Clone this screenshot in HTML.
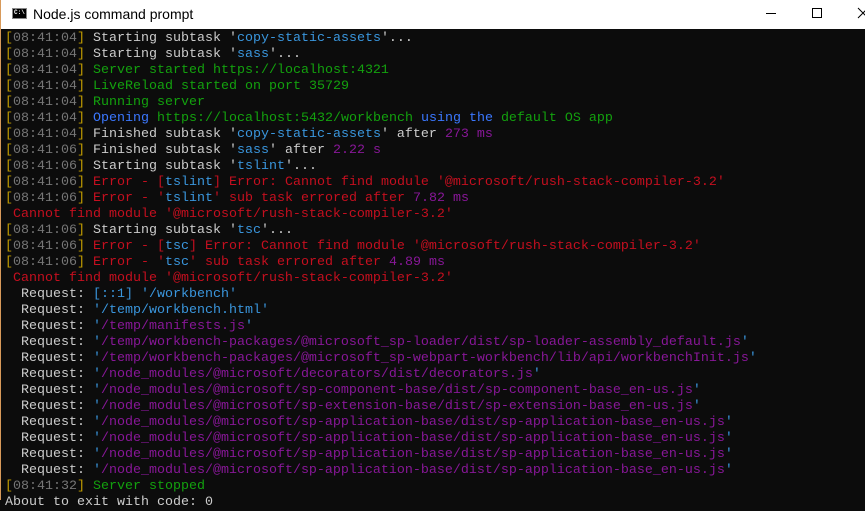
<!DOCTYPE html>
<html><head><meta charset="utf-8"><style>
html,body{margin:0;padding:0;width:865px;height:500px;overflow:hidden;background:#0c0c0c}
.tb{position:absolute;left:0;top:0;width:865px;height:29px;background:#fff;border-left:1px solid #d89a5a;box-sizing:border-box}
.tt{position:absolute;left:32px;top:6px;font:14px "Liberation Sans",sans-serif;color:#000}
.ic{position:absolute;left:11px;top:8px;width:15px;height:11px;background:#000;border:1px solid #888;box-sizing:border-box}
.ic span{position:absolute;left:1px;top:1px;font:bold 6px "Liberation Mono",monospace;color:#fff;line-height:6px}
.con{position:absolute;left:0;top:29px;width:865px;height:471px;border-left:1px solid #d89a5a;box-sizing:border-box}
pre{margin:0;padding:2px 0 0 4px;font:13.33px/16px "Liberation Mono",monospace;color:#cccccc;white-space:pre}
.g{color:#767676}.b{color:#c19c00}.c{color:#3a96dd}.gr{color:#13a10e}.r{color:#c50f1f}.p{color:#881798}.bl{color:#3b78ff}
</style></head><body>
<div class="tb"><div class="ic"><span>C:\</span></div><div class="tt">Node.js command prompt</div>
<svg style="position:absolute;left:760px;top:0" width="105" height="29"><line x1="5" y1="13.5" x2="15" y2="13.5" stroke="#000"/><rect x="51.5" y="8.5" width="9" height="9" fill="none" stroke="#000"/><path d="M97 8 L107 18 M107 8 L97 18" stroke="#000"/></svg></div>
<div class="con"><pre><span class="b">[</span><span class="g">08:41:04</span><span class="b">]</span> Starting subtask '<span class="c">copy-static-assets</span>'...
<span class="b">[</span><span class="g">08:41:04</span><span class="b">]</span> Starting subtask '<span class="c">sass</span>'...
<span class="b">[</span><span class="g">08:41:04</span><span class="b">]</span> <span class="gr">Server started https://localhost:4321</span>
<span class="b">[</span><span class="g">08:41:04</span><span class="b">]</span> <span class="gr">LiveReload started on port 35729</span>
<span class="b">[</span><span class="g">08:41:04</span><span class="b">]</span> <span class="gr">Running server</span>
<span class="b">[</span><span class="g">08:41:04</span><span class="b">]</span> <span class="bl">Opening</span> <span class="gr">https://localhost:5432/workbench</span> <span class="bl">using the</span> <span class="gr">default OS app</span>
<span class="b">[</span><span class="g">08:41:04</span><span class="b">]</span> Finished subtask '<span class="c">copy-static-assets</span>' after <span class="p">273 ms</span>
<span class="b">[</span><span class="g">08:41:06</span><span class="b">]</span> Finished subtask '<span class="c">sass</span>' after <span class="p">2.22 s</span>
<span class="b">[</span><span class="g">08:41:06</span><span class="b">]</span> Starting subtask '<span class="c">tslint</span>'...
<span class="b">[</span><span class="g">08:41:06</span><span class="b">]</span> <span class="r">Error - [</span><span class="c">tslint</span><span class="r">] Error: Cannot find module '@microsoft/rush-stack-compiler-3.2'</span>
<span class="b">[</span><span class="g">08:41:06</span><span class="b">]</span> <span class="r">Error - '</span><span class="c">tslint</span><span class="r">' sub task errored after </span><span class="p">7.82 ms</span>
<span class="r"> Cannot find module '@microsoft/rush-stack-compiler-3.2'</span>
<span class="b">[</span><span class="g">08:41:06</span><span class="b">]</span> Starting subtask '<span class="c">tsc</span>'...
<span class="b">[</span><span class="g">08:41:06</span><span class="b">]</span> <span class="r">Error - [</span><span class="c">tsc</span><span class="r">] Error: Cannot find module '@microsoft/rush-stack-compiler-3.2'</span>
<span class="b">[</span><span class="g">08:41:06</span><span class="b">]</span> <span class="r">Error - '</span><span class="c">tsc</span><span class="r">' sub task errored after </span><span class="p">4.89 ms</span>
<span class="r"> Cannot find module '@microsoft/rush-stack-compiler-3.2'</span>
  Request: <span class="c">[::1] '/workbench'</span>
  Request: <span class="c">'/temp/workbench.html'</span>
  Request: <span class="c">'</span><span class="p">/temp/manifests.js</span><span class="c">'</span>
  Request: <span class="c">'</span><span class="p">/temp/workbench-packages/@microsoft_sp-loader/dist/sp-loader-assembly_default.js</span><span class="c">'</span>
  Request: <span class="c">'</span><span class="p">/temp/workbench-packages/@microsoft_sp-webpart-workbench/lib/api/workbenchInit.js</span><span class="c">'</span>
  Request: <span class="c">'</span><span class="p">/node_modules/@microsoft/decorators/dist/decorators.js</span><span class="c">'</span>
  Request: <span class="c">'</span><span class="p">/node_modules/@microsoft/sp-component-base/dist/sp-component-base_en-us.js</span><span class="c">'</span>
  Request: <span class="c">'</span><span class="p">/node_modules/@microsoft/sp-extension-base/dist/sp-extension-base_en-us.js</span><span class="c">'</span>
  Request: <span class="c">'</span><span class="p">/node_modules/@microsoft/sp-application-base/dist/sp-application-base_en-us.js</span><span class="c">'</span>
  Request: <span class="c">'</span><span class="p">/node_modules/@microsoft/sp-application-base/dist/sp-application-base_en-us.js</span><span class="c">'</span>
  Request: <span class="c">'</span><span class="p">/node_modules/@microsoft/sp-application-base/dist/sp-application-base_en-us.js</span><span class="c">'</span>
  Request: <span class="c">'</span><span class="p">/node_modules/@microsoft/sp-application-base/dist/sp-application-base_en-us.js</span><span class="c">'</span>
<span class="b">[</span><span class="g">08:41:32</span><span class="b">]</span> <span class="gr">Server stopped</span>
About to exit with code: 0</pre></div>
</body></html>
